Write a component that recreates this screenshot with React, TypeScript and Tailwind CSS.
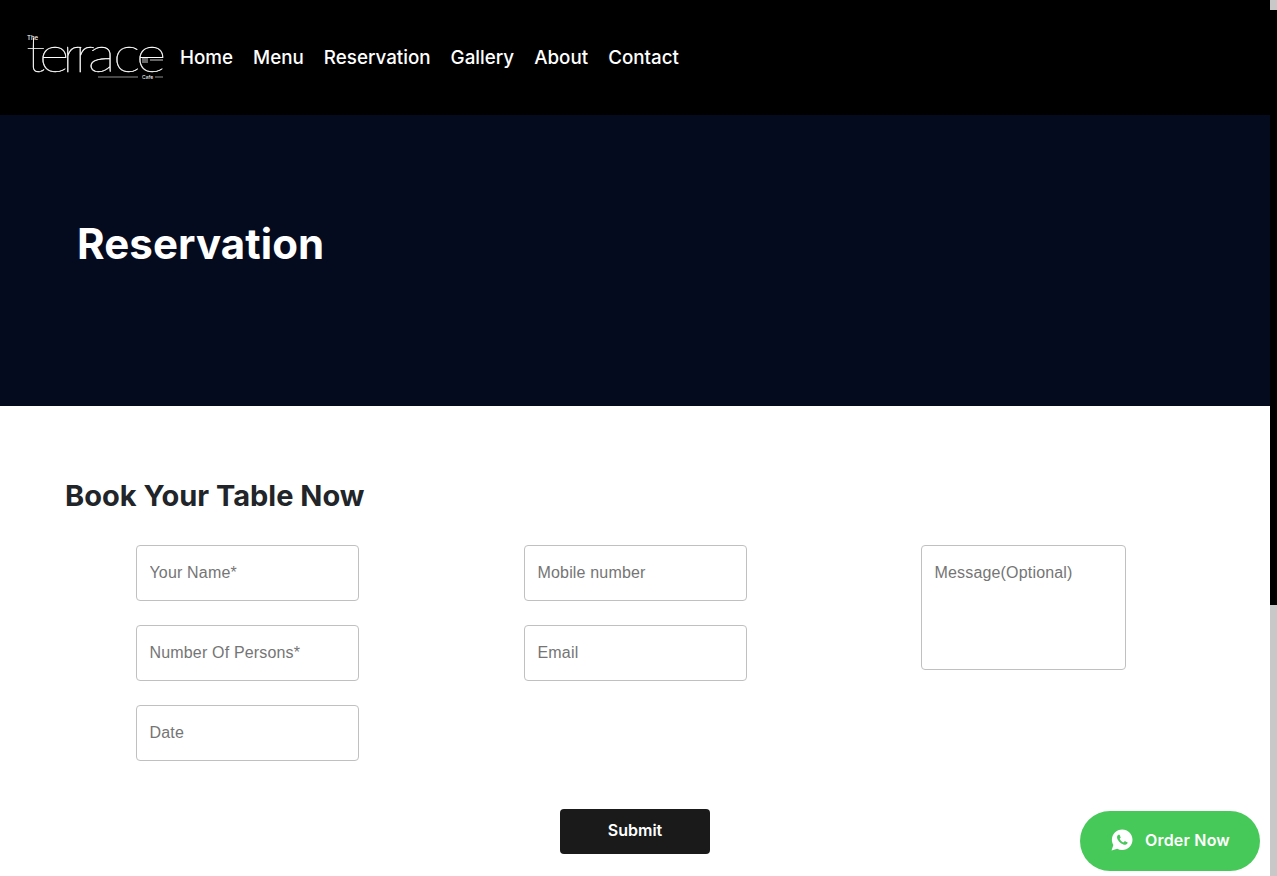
import { IoLogoWhatsapp } from "react-icons/io";

const display = "font-['Inter','Noto_Sans',sans-serif]";

function Logo() {
  return (
    <svg width="140" height="61" viewBox="0 0 140 61" className="shrink-0 overflow-visible" role="img" aria-label="The Terrace Cafe">
      <text x="2" y="13" fill="#fff" fontFamily="Inter, sans-serif" fontSize="6" fontWeight="500">The</text>
      <text x="0.9 11.7 30.8 41.2 52.2 73.3 92.5" y="45" transform="scale(1.2 1)" fill="#fff" stroke="#fff" strokeWidth="0.35" fontFamily="Lato, sans-serif" fontSize="49" fontWeight="100">terrace</text>
      <g stroke="#fff" strokeWidth="0.8" fill="none">
        <path d="M117 31h6M117 33h6M117 35h6M125 33h13" />
        <path d="M73 50h40M130 50h8" opacity="0.7" />
      </g>
      <text x="117" y="52" fill="#fff" fontFamily="Inter, sans-serif" fontSize="5">Cafe</text>
    </svg>
  );
}

const inputClass =
  "block w-[223px] h-[56px] rounded-[4px] border border-[#c0c0c0] bg-white px-[13px] text-[16px] tracking-[0.17px] font-['Liberation_Sans',Arial,sans-serif] text-[#212529] placeholder:text-[#757575] outline-none";

export default function App() {
  return (
    <div className="relative flex h-[876px] w-full overflow-hidden bg-white">
      <div className="min-w-0 flex-1">
        <header className="flex h-[115px] items-center bg-black pl-[25px]">
          <Logo />
          <nav className={`ml-[15px] flex gap-[20px] pt-[2px] text-[18.8px] font-medium text-white ${display}`}>
            <a>Home</a>
            <a>Menu</a>
            <a>Reservation</a>
            <a>Gallery</a>
            <a>About</a>
            <a>Contact</a>
          </nav>
        </header>

        <section className="flex h-[291px] items-center bg-[#050b1f] pb-[33px] pl-[77px]">
          <h1 className={`text-[42px] leading-[1.2] font-bold tracking-[0.1px] text-white ${display}`}>Reservation</h1>
        </section>

        <section className="mx-auto w-[1164px] pt-[72px]">
          <h2 className={`pl-[12px] text-[29px] leading-[36px] font-bold text-[#212529] ${display}`}>Book Your Table Now</h2>
          <form className="mt-[31px]">
            <div className="grid grid-cols-3">
              <div className="flex flex-col items-center gap-[24px]">
                <input className={inputClass} placeholder="Your Name*" />
                <input className={inputClass} placeholder="Number Of Persons*" />
                <input className={inputClass} placeholder="Date" />
              </div>
              <div className="flex flex-col items-center gap-[24px]">
                <input className={inputClass} placeholder="Mobile number" />
                <input className={inputClass} placeholder="Email" />
              </div>
              <div className="flex flex-col items-center">
                <textarea
                  className="block h-[125px] w-[205px] resize-none rounded-[4px] border border-[#c0c0c0] bg-white px-[13px] py-[15px] text-[16px] leading-[24px] tracking-[0.17px] font-['Liberation_Sans',Arial,sans-serif] placeholder:text-[#757575] outline-none"
                  placeholder="Message(Optional)"
                />
              </div>
            </div>
            <div className="mt-[48px] flex justify-center">
              <button type="button" className={`h-[45px] w-[150px] rounded-[4px] bg-[#1a1a1a] pb-[3px] text-[16px] font-semibold text-white ${display}`}>
                Submit
              </button>
            </div>
          </form>
        </section>
      </div>

      <aside className="flex w-[7px] shrink-0 flex-col bg-[#c8c8c8]">
        <div className="h-[10px]" />
        <div className="h-[595px] bg-black" />
      </aside>

      <a className={`absolute top-[811px] left-[1080px] flex h-[60px] w-[180px] items-center justify-center gap-[11px] rounded-full bg-[#47c95a] pb-[2px] text-[16px] font-semibold tracking-[0.2px] text-white ${display}`}>
        <IoLogoWhatsapp className="h-[24px] w-[24px]" />
        Order Now
      </a>
    </div>
  );
}
